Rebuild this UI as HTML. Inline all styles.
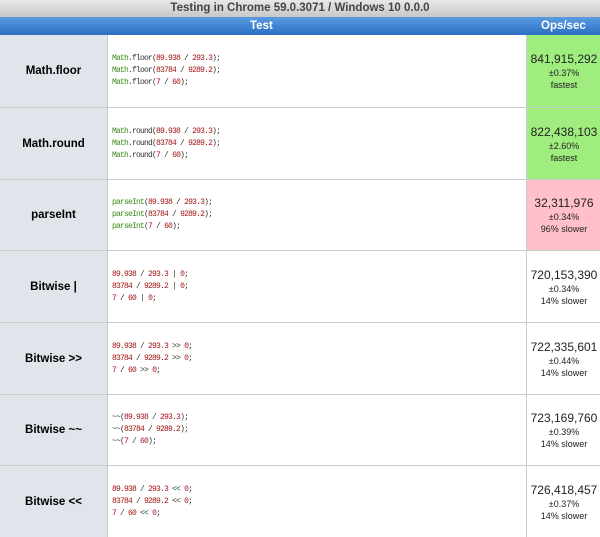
<!DOCTYPE html><html><head><style>
body{margin:0;width:600px;height:531px;overflow:hidden;background:#fff;font-family:"Liberation Sans",sans-serif;position:relative}
.t{position:absolute;left:0;top:0;width:600px;height:17px;background:linear-gradient(#e8e8e8,#c8c8c8);color:#444;font-weight:bold;font-size:11.5px;text-align:center;line-height:16px}
.h{position:absolute;left:0;top:17px;width:600px;height:18px;background:linear-gradient(#5a9be0,#2b6fc4);color:#fff;font-weight:bold;font-size:11.5px;line-height:18px}
.row{position:absolute;left:0;width:600px;border-bottom:1px solid #ccc}
.l{position:absolute;left:0;top:0;width:107px;height:100%;background:#dfe5ea;border-right:1px solid #c4ccd2;display:flex;align-items:center;justify-content:center;font-weight:bold;font-size:11.5px;color:#000}
.c{position:absolute;left:112px;top:0;height:100%;display:flex;flex-direction:column;justify-content:center;font-family:"Liberation Mono",monospace;font-size:8px;letter-spacing:-0.8px;line-height:12px;color:#333}
.o{position:absolute;left:526px;top:0;width:74px;height:100%;border-left:1px solid #ccc;display:flex;flex-direction:column;align-items:center;justify-content:center;text-align:center;font-size:9px;line-height:12px;color:#222}
.o b{font-weight:normal;font-size:12px;line-height:16px}
.g{color:#3a8a1a}.n{color:#a31515}
</style></head><body>
<div class="t">Testing in Chrome 59.0.3071 / Windows 10 0.0.0</div>
<div class="h"><span style="position:absolute;left:250px">Test</span><span style="position:absolute;left:541px">Ops/sec</span></div>

<div class="row" style="top:35px;height:72px"><div class="l">Math.floor</div><div class="c"><div><span class="g">Math</span>.floor(<span class="n">89.938</span> / <span class="n">293.3</span>);</div><div><span class="g">Math</span>.floor(<span class="n">83784</span> / <span class="n">9289.2</span>);</div><div><span class="g">Math</span>.floor(<span class="n">7</span> / <span class="n">60</span>);</div></div><div class="o" style="background:#9eed7e"><b>841,915,292</b><span>±0.37%</span><span>fastest</span></div></div>

<div class="row" style="top:108px;height:71px"><div class="l">Math.round</div><div class="c"><div><span class="g">Math</span>.round(<span class="n">89.938</span> / <span class="n">293.3</span>);</div><div><span class="g">Math</span>.round(<span class="n">83784</span> / <span class="n">9289.2</span>);</div><div><span class="g">Math</span>.round(<span class="n">7</span> / <span class="n">60</span>);</div></div><div class="o" style="background:#9eed7e"><b>822,438,103</b><span>±2.60%</span><span>fastest</span></div></div>

<div class="row" style="top:180px;height:70px"><div class="l">parseInt</div><div class="c"><div><span class="g">parseInt</span>(<span class="n">89.938</span> / <span class="n">293.3</span>);</div><div><span class="g">parseInt</span>(<span class="n">83784</span> / <span class="n">9289.2</span>);</div><div><span class="g">parseInt</span>(<span class="n">7</span> / <span class="n">60</span>);</div></div><div class="o" style="background:#ffc0cb"><b>32,311,976</b><span>±0.34%</span><span>96% slower</span></div></div>

<div class="row" style="top:251px;height:71px"><div class="l">Bitwise |</div><div class="c"><div><span class="n">89.938</span> / <span class="n">293.3</span> | <span class="n">0</span>;</div><div><span class="n">83784</span> / <span class="n">9289.2</span> | <span class="n">0</span>;</div><div><span class="n">7</span> / <span class="n">60</span> | <span class="n">0</span>;</div></div><div class="o"><b>720,153,390</b><span>±0.34%</span><span>14% slower</span></div></div>

<div class="row" style="top:323px;height:71px"><div class="l">Bitwise &gt;&gt;</div><div class="c"><div><span class="n">89.938</span> / <span class="n">293.3</span> &gt;&gt; <span class="n">0</span>;</div><div><span class="n">83784</span> / <span class="n">9289.2</span> &gt;&gt; <span class="n">0</span>;</div><div><span class="n">7</span> / <span class="n">60</span> &gt;&gt; <span class="n">0</span>;</div></div><div class="o"><b>722,335,601</b><span>±0.44%</span><span>14% slower</span></div></div>

<div class="row" style="top:395px;height:70px"><div class="l">Bitwise ~~</div><div class="c"><div>~~(<span class="n">89.938</span> / <span class="n">293.3</span>);</div><div>~~(<span class="n">83784</span> / <span class="n">9289.2</span>);</div><div>~~(<span class="n">7</span> / <span class="n">60</span>);</div></div><div class="o"><b>723,169,760</b><span>±0.39%</span><span>14% slower</span></div></div>

<div class="row" style="top:466px;height:71px;border:none"><div class="l">Bitwise &lt;&lt;</div><div class="c"><div><span class="n">89.938</span> / <span class="n">293.3</span> &lt;&lt; <span class="n">0</span>;</div><div><span class="n">83784</span> / <span class="n">9289.2</span> &lt;&lt; <span class="n">0</span>;</div><div><span class="n">7</span> / <span class="n">60</span> &lt;&lt; <span class="n">0</span>;</div></div><div class="o"><b>726,418,457</b><span>±0.37%</span><span>14% slower</span></div></div>
</body></html>
